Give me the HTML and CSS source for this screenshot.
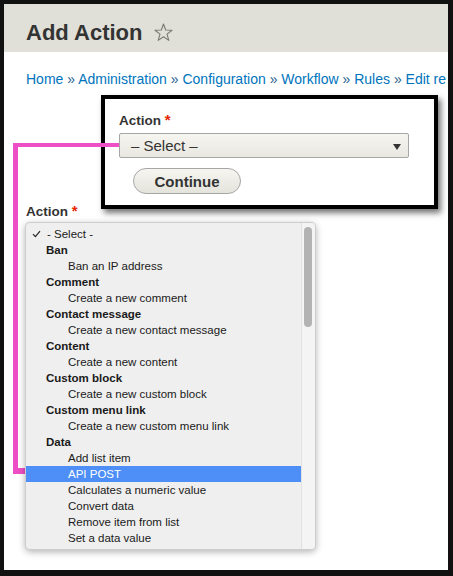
FILE: index.html
```html
<!DOCTYPE html>
<html lang="en">
<head>
    <meta charset="UTF-8">
    <title>Add Action</title>
    <link rel="stylesheet" href="styles.css">
</head>
<body>
    <div class="screen">
        <div class="page-header">
            <h1 class="page-title">Add Action</h1>
            <svg class="star" width="19" height="19" viewBox="0 0 19 19">
                <polygon points="9.5,1 11.7,7 18,7.2 13,11.1 14.8,17.4 9.5,13.7 4.2,17.4 6,11.1 1,7.2 7.3,7" fill="none" stroke="#7a7a74" stroke-width="1.1" stroke-linejoin="round"/>
            </svg>
        </div>

        <nav class="breadcrumb">
            <a href="#">Home</a> <span class="sep">»</span>
            <a href="#">Administration</a> <span class="sep">»</span>
            <a href="#">Configuration</a> <span class="sep">»</span>
            <a href="#">Workflow</a> <span class="sep">»</span>
            <a href="#">Rules</a> <span class="sep">»</span>
            <a href="#">Edit re</a>
        </nav>

        <div class="form">
            <label class="form-label">Action <span class="req">*</span></label>
        </div>

        <!-- callout: the form as it normally looks -->
        <div class="callout">
            <label class="form-label">Action <span class="req">*</span></label>
            <div class="select">
                <span>– Select –</span>
                <span class="arrow"></span>
            </div>
            <button class="btn">Continue</button>
        </div>

        <div class="connector"></div>

        <!-- open select popup -->
        <div class="popup">
            <ul class="options">
                <li class="opt top"><svg class="check" width="9" height="8" viewBox="0 0 9 8"><polyline points="1,4.2 3.4,6.6 8,1.2" fill="none" stroke="#222" stroke-width="1.2"/></svg>- Select -</li>
                <li class="group">Ban</li>
                <li class="opt">Ban an IP address</li>
                <li class="group">Comment</li>
                <li class="opt">Create a new comment</li>
                <li class="group">Contact message</li>
                <li class="opt">Create a new contact message</li>
                <li class="group">Content</li>
                <li class="opt">Create a new content</li>
                <li class="group">Custom block</li>
                <li class="opt">Create a new custom block</li>
                <li class="group">Custom menu link</li>
                <li class="opt">Create a new custom menu link</li>
                <li class="group">Data</li>
                <li class="opt">Add list item</li>
                <li class="opt selected">API POST</li>
                <li class="opt">Calculates a numeric value</li>
                <li class="opt">Convert data</li>
                <li class="opt">Remove item from list</li>
                <li class="opt">Set a data value</li>
            </ul>
            <div class="scrollbar"><div class="thumb"></div></div>
        </div>
    </div>
</body>
</html>
```

FILE: styles.css
```css
* { box-sizing: border-box; }
body { margin: 0; font-family: "Liberation Sans", Arial, sans-serif; color: #333; }
.screen {
    position: relative; width: 453px; height: 576px; overflow: hidden;
    background: #fff; border: solid #111; border-width: 4px 5px 6px 4px;
}
.page-header {
    height: 48px; background: #e0e0d8; padding: 16px 0 0 22px;
    display: flex; align-items: flex-start;
}
.page-title { margin: 0; font-size: 22px; line-height: 26px; font-weight: bold; color: #333; }
.star { margin: 3px 0 0 11px; }
.breadcrumb {
    margin-top: 17px; padding-left: 22px; font-size: 14px; line-height: 20px;
    white-space: nowrap; overflow: hidden; color: #0074bd;
}
.breadcrumb a { color: #0074bd; text-decoration: none; }
.breadcrumb .sep { color: #1f5f8f; }
.form { margin-top: 115px; padding-left: 22px; }
.form-label { display: block; font-size: 13.5px; line-height: 16px; font-weight: bold; color: #333; }
.req { color: #e32700; font-size: 15px; vertical-align: top; line-height: 14px; }

.callout {
    position: absolute; left: 97px; top: 91px; width: 337px; height: 114px;
    background: #fff; border: 4px solid #000; padding: 14px 0 0 14px;
    box-shadow: 3px 4px 6px rgba(0, 0, 0, 0.55);
}
.select {
    margin-top: 4px; width: 290px; height: 25px; border: 1px solid #a6a6a6; border-radius: 2px;
    background: linear-gradient(#f6f5f0, #e8e7e0); display: flex; align-items: center;
    justify-content: space-between; padding: 0 7px 0 11px; font-size: 15px; color: #333;
}
.arrow { width: 0; height: 0; border-left: 4.5px solid transparent; border-right: 4.5px solid transparent; border-top: 6px solid #333; margin-top: 2px; }
.btn {
    display: block; margin: 10px 0 0 14px; width: 108px; height: 26px; border-radius: 13px;
    border: 1px solid #a6a6a6; background: linear-gradient(#f6f5f0, #e4e3dc);
    font-family: inherit; font-size: 15px; font-weight: bold; color: #333; padding: 0;
}

.connector {
    position: absolute; left: 9px; top: 139px; width: 106px; height: 331px;
    border: solid #ef4fc6; border-width: 4px 0 6px 5px;
}

.popup {
    position: absolute; left: 21px; top: 218px; width: 291px; height: 328px;
    background: #efefef; border: 1px solid rgba(0, 0, 0, 0.14); border-radius: 5px;
    box-shadow: 0 2px 7px rgba(0, 0, 0, 0.3); display: flex; overflow: hidden;
}
.options { list-style: none; margin: 0; padding: 3px 0; flex: 1; }
.options li { height: 16px; line-height: 16px; font-size: 11.5px; color: #1a1a1a; white-space: nowrap; }
.options .group { font-weight: bold; padding-left: 20px; }
.options .opt { padding-left: 42px; }
.options .top { padding-left: 6px; display: flex; align-items: center; }
.check { margin-right: 6px; }
.options .selected { background: #4d8ff7; color: #fff; }
.scrollbar { width: 14px; background: #f4f4f4; border-left: 1px solid #e2e2e2; padding: 4px 0 0 2px; }
.thumb { width: 8px; height: 100px; border-radius: 4px; background: #b3b3b3; }
```
